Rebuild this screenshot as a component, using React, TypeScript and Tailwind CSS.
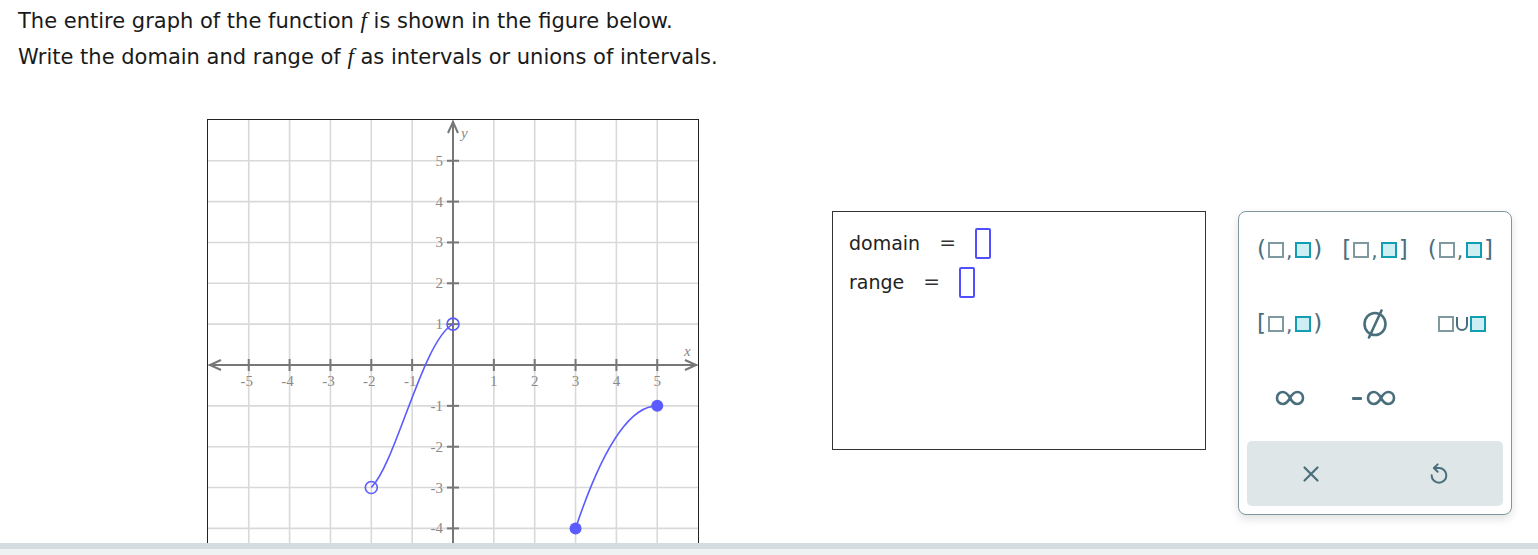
const U = 40.85;
const O = 245;
const X = (v: number) => O + v * U;
const Y = (v: number) => O - v * U;

const INK = "#4a6f7c";
const BLUE = "#5b5bff";

function Graph() {
  const ticks = [-5, -4, -3, -2, -1, 1, 2, 3, 4, 5];
  const grid = [-5, -4, -3, -2, -1, 0, 1, 2, 3, 4, 5];
  const c1 = `M${X(-2)} ${Y(-3)} C${X(-1.39)} ${Y(-2.39)} ${X(-0.74)} ${Y(0.6)} ${X(0)} ${Y(1)}`;
  const c2 = `M${X(3)} ${Y(-4)} Q${X(4)} ${Y(-1)} ${X(5)} ${Y(-1)}`;

  return (
    <div className="ml-[207px] border border-[#222] w-[492px] h-[492px] shrink-0 bg-white">
      <svg width="490" height="490" viewBox="0 0 490 490" className="block">
        {grid.map((v) => (
          <g key={v}>
            <line x1={X(v)} y1={0} x2={X(v)} y2={490} stroke="#d9d9d9" strokeWidth="1.6" />
            <line x1={0} y1={Y(v)} x2={490} y2={Y(v)} stroke="#d9d9d9" strokeWidth="1.6" />
          </g>
        ))}

        {/* axes */}
        <line x1={1} y1={O} x2={489} y2={O} stroke="#777" strokeWidth="2" />
        <line x1={O} y1={1} x2={O} y2={489} stroke="#777" strokeWidth="2" />
        <polyline points={`13,${O - 5} 2,${O} 13,${O + 5}`} fill="none" stroke="#777" strokeWidth="2" />
        <polyline points={`477,${O - 5} 488,${O} 477,${O + 5}`} fill="none" stroke="#777" strokeWidth="2" />
        <polyline points={`${O - 5},13 ${O},2 ${O + 5},13`} fill="none" stroke="#777" strokeWidth="2" />
        <polyline points={`${O - 5},477 ${O},488 ${O + 5},477`} fill="none" stroke="#777" strokeWidth="2" />

        {ticks.map((v) => (
          <g key={v}>
            <line x1={X(v)} y1={O - 6} x2={X(v)} y2={O + 6} stroke="#777" strokeWidth="2" />
            <line x1={O - 6} y1={Y(v)} x2={O + 6} y2={Y(v)} stroke="#777" strokeWidth="2" />
            <text
              x={X(v) - (v < 0 ? 2 : 0)}
              y={O + 21}
              textAnchor="middle"
              fontFamily="'Liberation Serif', serif"
              fontSize="15"
              fill="#8a8a8a"
            >
              {v}
            </text>
            <text
              x={O - 10}
              y={Y(v) + 5}
              textAnchor="end"
              fontFamily="'Liberation Serif', serif"
              fontSize="15"
              fill="#8a8a8a"
            >
              {v}
            </text>
          </g>
        ))}

        <text x={476} y={236} fontFamily="'Liberation Serif', serif" fontStyle="italic" fontSize="15" fill="#888">
          x
        </text>
        <text x={253} y={18} fontFamily="'Liberation Serif', serif" fontStyle="italic" fontSize="15" fill="#888">
          y
        </text>

        {/* f */}
        <path d={c1} fill="none" stroke={BLUE} strokeWidth="1.6" />
        <path d={c2} fill="none" stroke={BLUE} strokeWidth="1.6" />
        <circle cx={X(-2)} cy={Y(-3)} r="6" fill="none" stroke={BLUE} strokeWidth="1.6" />
        <circle cx={X(0)} cy={Y(1)} r="6" fill="none" stroke={BLUE} strokeWidth="1.6" />
        <circle cx={X(3)} cy={Y(-4)} r="6" fill={BLUE} />
        <circle cx={X(5)} cy={Y(-1)} r="6" fill={BLUE} />
      </svg>
    </div>
  );
}

function AnswerBox() {
  return (
    <div className="mt-[92px] ml-[133px] w-[374px] h-[239px] border border-[#333] shrink-0 pl-[16px] pt-[15px] flex flex-col gap-[7px] font-['DejaVu_Sans',sans-serif] text-[19px] text-[#222]">
      {["domain", "range"].map((label) => (
        <div key={label} className="flex items-center h-[32px] gap-[19px]">
          <span>{label}</span>
          <span className="font-['DejaVu_Serif',serif] text-[20px] text-[#333]">=</span>
          <span className="w-[16px] h-[31px] border-2 border-[#4f4fff] rounded-[2px]" />
        </div>
      ))}
    </div>
  );
}

const Br = ({ c }: { c: string }) => (
  <span className="text-[23px] leading-none text-[#4a6f7c] font-['DejaVu_Sans',sans-serif] -mt-[2px]">{c}</span>
);
const Empty = () => <span className="w-[16px] h-[16px] border-2 border-[#7f99a1] bg-white" />;
const Filled = () => <span className="w-[16px] h-[16px] border-2 border-[#129db3] bg-[#cdeef3]" />;

function Interval({ l, r }: { l: string; r: string }) {
  return (
    <div className="flex items-center gap-[2px]">
      <Br c={l} />
      <Empty />
      <span className="text-[20px] leading-none text-[#4a6f7c] font-['DejaVu_Sans',sans-serif] mt-[2px] mr-[1px]">,</span>
      <Filled />
      <Br c={r} />
    </div>
  );
}

function Inf() {
  return (
    <svg width="30" height="18" viewBox="0 0 30 18">
      <path
        d="M15 9 C12.5 4.5 10.5 3 7.8 3 C4.5 3 2 5.6 2 9 C2 12.4 4.5 15 7.8 15 C10.5 15 12.5 13.5 15 9 C17.5 4.5 19.5 3 22.2 3 C25.5 3 28 5.6 28 9 C28 12.4 25.5 15 22.2 15 C19.5 15 17.5 13.5 15 9 Z"
        fill="none"
        stroke={INK}
        strokeWidth="2.6"
      />
    </svg>
  );
}

function Keypad() {
  const cell = "flex items-center justify-center h-[60px]";
  return (
    <div className="mt-[92px] ml-[32px] w-[274px] h-[304px] shrink-0 rounded-[8px] border border-[#7e97a0] bg-white shadow-[0_4px_10px_rgba(0,0,0,0.12)] p-[8px] flex flex-col">
      <div className="grid grid-cols-3 gap-y-[14px]">
        <div className={cell}>
          <Interval l="(" r=")" />
        </div>
        <div className={cell}>
          <Interval l="[" r="]" />
        </div>
        <div className={cell}>
          <Interval l="(" r="]" />
        </div>
        <div className={cell}>
          <Interval l="[" r=")" />
        </div>
        <div className={cell}>
          <svg width="28" height="30" viewBox="0 0 28 30">
            <ellipse cx="14" cy="15" rx="10.5" ry="11" fill="none" stroke={INK} strokeWidth="2.6" />
            <line x1="8" y1="28.5" x2="20.5" y2="1.5" stroke={INK} strokeWidth="2.6" strokeLinecap="round" />
          </svg>
        </div>
        <div className={cell}>
          <div className="flex items-center gap-[1px] ml-[3px]">
            <Empty />
            <svg width="14" height="16" viewBox="0 0 14 16">
              <path d="M2 1 V9 A5 5 0 0 0 12 9 V1" fill="none" stroke={INK} strokeWidth="2" />
            </svg>
            <Filled />
          </div>
        </div>
        <div className={cell}>
          <Inf />
        </div>
        <div className={cell}>
          <div className="flex items-center gap-[4px] mr-[2px]">
            <span className="w-[10px] h-[3px] bg-[#4a6f7c] rounded-[1px]" />
            <Inf />
          </div>
        </div>
        <div className={cell} />
      </div>
      <div className="mt-[13px] h-[66px] rounded-[5px] bg-[#dfe6e8] grid grid-cols-2">
        <div className="flex items-center justify-center">
          <svg width="18" height="18" viewBox="0 0 18 18">
            <path d="M2.5 2.5 L15.5 15.5 M15.5 2.5 L2.5 15.5" stroke={INK} strokeWidth="2.2" strokeLinecap="round" />
          </svg>
        </div>
        <div className="flex items-center justify-center">
          <svg width="22" height="24" viewBox="0 0 24 26">
            <path d="M10.5 2.5 L6.5 6.5 L10.5 10.5" fill="none" stroke={INK} strokeWidth="2.2" strokeLinecap="round" strokeLinejoin="round" />
            <path d="M6.5 6.5 H12 A8 8 0 1 1 4 14.5" fill="none" stroke={INK} strokeWidth="2.2" strokeLinecap="round" />
          </svg>
        </div>
      </div>
    </div>
  );
}

export default function App() {
  return (
    <div className="relative w-[1538px] h-[555px] overflow-hidden bg-white">
      <div className="pl-[18px] pt-[3px] font-['DejaVu_Sans',sans-serif] text-[21px] leading-[36px] text-[#1a1a1a]">
        <p>
          The entire graph of the function{" "}
          <i className="font-['Liberation_Serif',serif] text-[23px]">f</i> is shown in the figure below.
        </p>
        <p>
          Write the domain and range of <i className="font-['Liberation_Serif',serif] text-[23px]">f</i> as intervals
          or unions of intervals.
        </p>
      </div>

      <div className="flex items-start mt-[44px]">
        <Graph />
        <AnswerBox />
        <Keypad />
      </div>

      <div className="absolute left-0 right-0 bottom-0 h-[12px] flex flex-col">
        <div className="h-[6px] bg-[#d4dcdf]" />
        <div className="flex-1 bg-[#eef2f3]" />
      </div>
    </div>
  );
}
